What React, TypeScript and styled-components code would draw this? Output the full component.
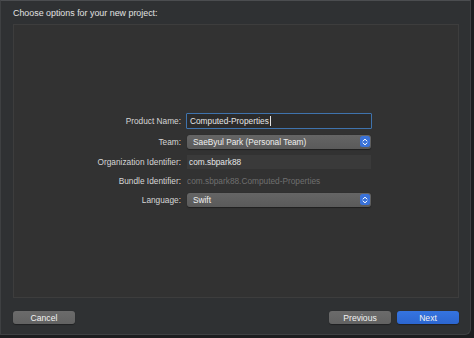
import styled, { createGlobalStyle } from 'styled-components'

const GlobalStyle = createGlobalStyle`
  html, body {
    margin: 0;
    padding: 0;
    background: #1c1d1f;
    font-family: "Liberation Sans", Arial, sans-serif;
    -webkit-font-smoothing: antialiased;
  }
`

const Window = styled.div`
  box-sizing: border-box;
  width: 471px;
  height: 335px;
  background: #2f3133;
  border: 1px solid #3e4042;
  border-top-color: #4b4d50;
  border-bottom-right-radius: 6px;
  padding: 0 11px 0 12px;
  display: flex;
  flex-direction: column;
`

const Title = styled.div`
  height: 22px;
  display: flex;
  align-items: center;
  padding-top: 1px;
  font-size: 8.9px;
  color: #e2e2e2;
`

const Panel = styled.div`
  box-sizing: border-box;
  height: 274px;
  padding-bottom: 3px;
  background: #323232;
  border: 1px solid #3d3d3d;
  display: flex;
  align-items: center;
`

const Form = styled.div`
  display: grid;
  grid-template-columns: 167px 184px;
  column-gap: 6px;
  row-gap: 6px;
  align-items: center;
`

const Label = styled.div<{ h: number }>`
  height: ${p => p.h}px;
  display: flex;
  align-items: center;
  justify-content: flex-end;
  font-size: 8.3px;
  color: #d6d6d6;
`

const TextField = styled.div<{ focused?: boolean }>`
  box-sizing: border-box;
  height: ${p => (p.focused ? 16 : 14)}px;
  margin: ${p => (p.focused ? '0 -1px' : '0')};
  display: flex;
  align-items: center;
  padding-left: ${p => (p.focused ? 3 : 2)}px;
  background: ${p => (p.focused ? '#2b2b2b' : '#3a3a3a')};
  border: ${p => (p.focused ? '1.5px solid #3f73ad' : '0')};
  border-radius: ${p => (p.focused ? 1 : 0)}px;
  font-size: 8.3px;
  color: #e6e6e6;
`

const Caret = styled.span`
  display: inline-block;
  width: 1px;
  height: 10px;
  background: #e6e6e6;
  margin-left: 1px;
`

const Popup = styled.div`
  box-sizing: border-box;
  height: 14px;
  display: flex;
  align-items: center;
  justify-content: space-between;
  padding: 0 1px 0 6px;
  background: linear-gradient(#656565, #5a5a5a);
  border-radius: 3px;
  box-shadow: 0 0.5px 1px rgba(0, 0, 0, 0.4);
  font-size: 8.3px;
  color: #f0f0f0;
`

const Stepper = styled.div`
  width: 10px;
  height: 11px;
  border-radius: 2.5px;
  background: #3a72d8;
  display: flex;
  align-items: center;
  justify-content: center;
`

const Plain = styled.div`
  height: 12px;
  display: flex;
  align-items: center;
  font-size: 8.3px;
  color: #6f6f6f;
`

const Footer = styled.div`
  flex: 1;
  display: flex;
  align-items: flex-start;
  padding-top: 13px;
  gap: 6px;
`

const Spacer = styled.div`
  flex: 1;
`

const Button = styled.div<{ primary?: boolean }>`
  width: 62px;
  height: 13px;
  border-radius: 3px;
  display: flex;
  align-items: center;
  justify-content: center;
  font-size: 8.6px;
  color: #f2f2f2;
  background: ${p => (p.primary ? 'linear-gradient(#3574e0, #2c66d0)' : 'linear-gradient(#6b6b6b, #626262)')};
  box-shadow: 0 0.5px 1px rgba(0, 0, 0, 0.35);
`

const StepperIcon = () => (
  <svg width="6" height="8" viewBox="0 0 6 8">
    <path d="M1 3 L3 1.2 L5 3 M1 5 L3 6.8 L5 5" fill="none" stroke="#fff" strokeWidth="1" strokeLinecap="round" strokeLinejoin="round" />
  </svg>
)

export default function App() {
  return (
    <>
      <GlobalStyle />
      <Window>
        <Title>Choose options for your new project:</Title>
        <Panel>
          <Form>
            <Label h={16}>Product Name:</Label>
            <TextField focused>
              Computed-Properties
              <Caret />
            </TextField>

            <Label h={14}>Team:</Label>
            <Popup>
              SaeByul Park (Personal Team)
              <Stepper>
                <StepperIcon />
              </Stepper>
            </Popup>

            <Label h={14}>Organization Identifier:</Label>
            <TextField>com.sbpark88</TextField>

            <Label h={12}>Bundle Identifier:</Label>
            <Plain>com.sbpark88.Computed-Properties</Plain>

            <Label h={14}>Language:</Label>
            <Popup>
              Swift
              <Stepper>
                <StepperIcon />
              </Stepper>
            </Popup>
          </Form>
        </Panel>
        <Footer>
          <Button>Cancel</Button>
          <Spacer />
          <Button>Previous</Button>
          <Button primary>Next</Button>
        </Footer>
      </Window>
    </>
  )
}
